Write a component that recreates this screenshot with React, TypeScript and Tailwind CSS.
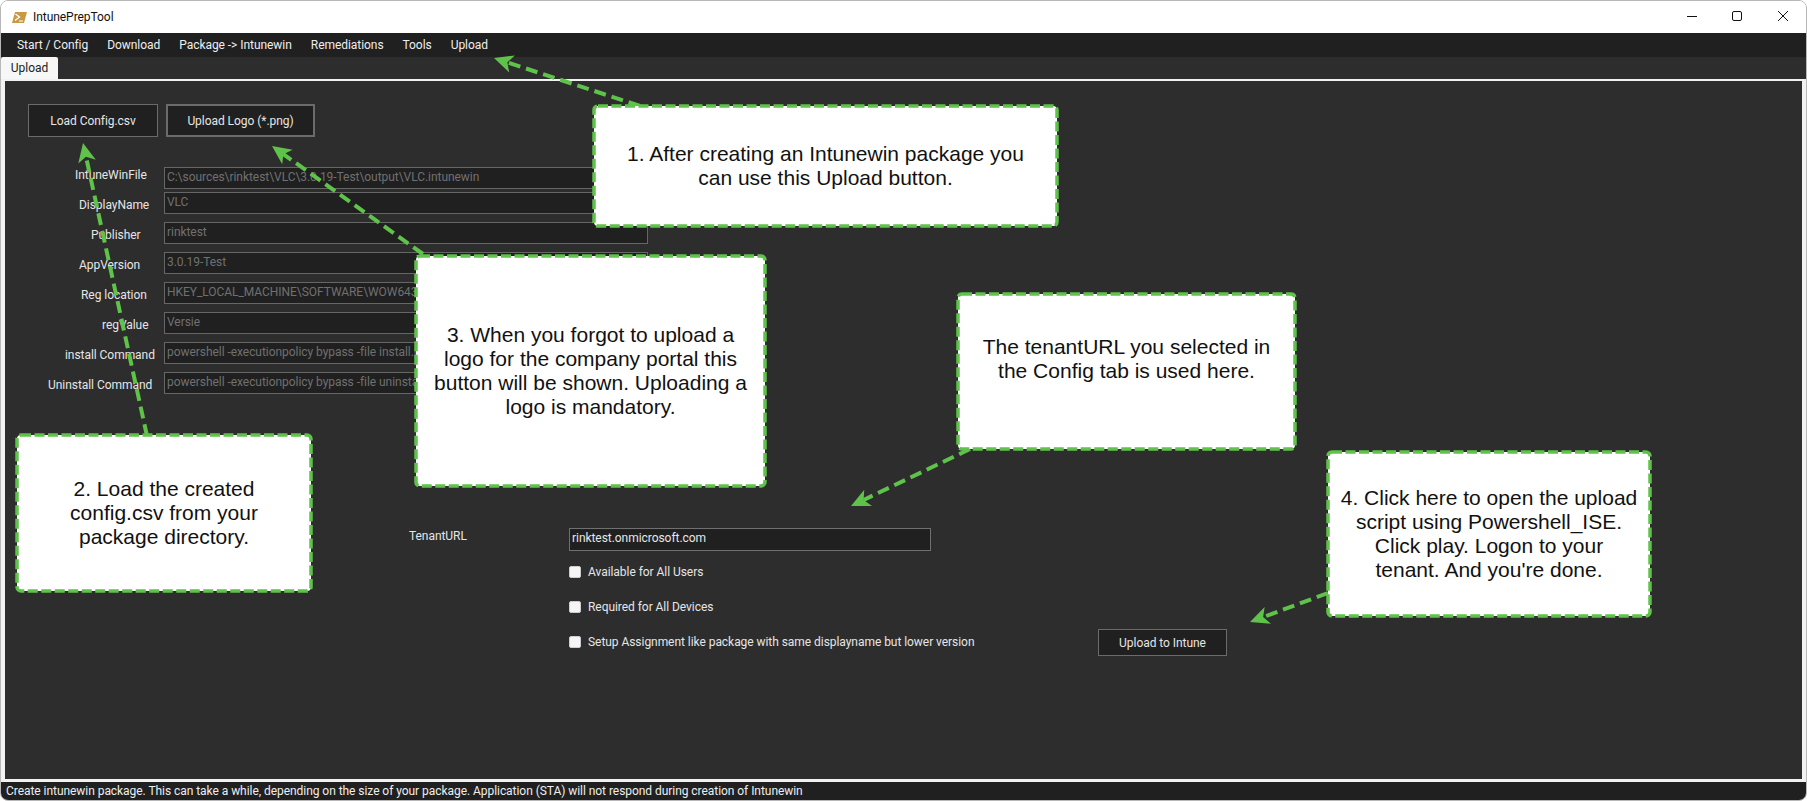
const sans = 'font-["Roboto",sans-serif]';

const menuItems = [
  { label: 'Start / Config', cls: 'ml-[16px]' },
  { label: 'Download', cls: 'ml-[19px]' },
  { label: 'Package -> Intunewin', cls: 'ml-[19px]' },
  { label: 'Remediations', cls: 'ml-[19px]' },
  { label: 'Tools', cls: 'ml-[19px]' },
  { label: 'Upload', cls: 'ml-[19px]' },
];

const fields = [
  { label: 'IntuneWinFile', value: 'C:\\sources\\rinktest\\VLC\\3.0.19-Test\\output\\VLC.intunewin', pad: 'pl-[70px]', gap: '' },
  { label: 'DisplayName', value: 'VLC', pad: 'pl-[74px] pt-[5px]', gap: 'mt-[3px]' },
  { label: 'Publisher', value: 'rinktest', pad: 'pl-[86px] pt-[5px]', gap: 'mt-[8px]' },
  { label: 'AppVersion', value: '3.0.19-Test', pad: 'pl-[74px] pt-[5px]', gap: 'mt-[8px]' },
  { label: 'Reg location', value: 'HKEY_LOCAL_MACHINE\\SOFTWARE\\WOW6432Node\\VideoLAN\\VLC', pad: 'pl-[76px] pt-[5px]', gap: 'mt-[8px]' },
  { label: 'regValue', value: 'Versie', pad: 'pl-[97px] pt-[5px]', gap: 'mt-[8px]' },
  { label: 'install Command', value: 'powershell -executionpolicy bypass -file install.ps1', pad: 'pl-[60px] pt-[5px]', gap: 'mt-[8px]' },
  { label: 'Uninstall Command', value: 'powershell -executionpolicy bypass -file uninstall.ps1', pad: 'pl-[43px] pt-[5px]', gap: 'mt-[8px]' },
];

const checks = [
  { label: 'Available for All Users', gap: 'mt-[14px]' },
  { label: 'Required for All Devices', gap: 'mt-[21px]' },
  { label: 'Setup Assignment like package with same displayname but lower version', gap: 'mt-[21px]' },
];

// annotation arrows, drawn over the form (x1,y1 tail -> x2,y2 tip)
const arrows = [
  [640, 106, 494, 58],
  [147, 436, 83, 143],
  [423, 254, 272, 146],
  [970, 449, 851, 506],
  [1328, 593, 1250, 622],
];

function arrowHead(x1: number, y1: number, x2: number, y2: number) {
  const a = Math.atan2(y2 - y1, x2 - x1);
  const p = (d: number, o: number) =>
    `${x2 - Math.cos(a) * d - Math.sin(a) * o},${y2 - Math.sin(a) * d + Math.cos(a) * o}`;
  return `${x2},${y2} ${p(19, 9)} ${p(14, 0)} ${p(19, -9)}`;
}

function DashedBox({ w, h }: { w: number; h: number }) {
  return (
    <svg className="absolute left-0 top-0" width={w} height={h}>
      <rect x="2" y="2" width={w - 4} height={h - 4} rx="4" fill="white" stroke="#5fc24a" strokeWidth="3.5" strokeDasharray="10 3.5" />
    </svg>
  );
}

function Callout({ cls, w, h, lines, pad = '' }: { cls: string; w: number; h: number; lines: string[]; pad?: string }) {
  return (
    <div className={'absolute ' + cls}>
      <DashedBox w={w} h={h} />
      <div className={'relative flex h-full w-full flex-col items-center justify-center font-["Liberation_Sans",sans-serif] text-[21px] leading-[24px] tracking-normal text-[#111] ' + pad}>
        {lines.map((l) => (
          <div key={l} className="whitespace-nowrap">{l}</div>
        ))}
      </div>
    </div>
  );
}

function PsIcon() {
  return (
    <svg width="15" height="11" viewBox="0 0 15 11" className="ml-[11px] shrink-0">
      <polygon points="3,0 15,0 12,11 0,11" fill="#c99a45" />
      <path d="M3.5 2 L7.5 5 L3 8.5" stroke="white" strokeWidth="1.3" fill="none" />
      <path d="M7 9 H11" stroke="white" strokeWidth="1.2" />
    </svg>
  );
}

function WindowControls() {
  return (
    <div className="-mt-[2px] ml-auto flex items-center">
      <svg width="12" height="12" viewBox="0 0 12 12" className="mr-[33px]"><path d="M1 6.5 H11" stroke="#111" strokeWidth="1" /></svg>
      <svg width="12" height="12" viewBox="0 0 12 12" className="mr-[34px]"><rect x="1.5" y="1.5" width="9" height="9" rx="1.5" fill="none" stroke="#111" strokeWidth="1" /></svg>
      <svg width="12" height="12" viewBox="0 0 12 12" className="mr-[17px]"><path d="M1 1 L11 11 M11 1 L1 11" stroke="#111" strokeWidth="1" /></svg>
    </div>
  );
}

export default function App() {
  return (
    <div className={'relative flex h-[801px] w-[1807px] flex-col overflow-hidden bg-white text-[12px] leading-[16px] tracking-[-0.05px] ' + sans}>
      <div className="flex h-full flex-col overflow-hidden rounded-[8px] border border-[#b8b8b8]">
        {/* title bar */}
        <div className="flex h-[32px] shrink-0 items-center bg-white text-[#111]">
          <PsIcon />
          <span className="ml-[6px]">IntunePrepTool</span>
          <WindowControls />
        </div>

        {/* menu */}
        <div className="flex h-[24px] shrink-0 items-center bg-[#202020] text-[#eee]">
          {menuItems.map((m) => (
            <span key={m.label} className={m.cls}>{m.label}</span>
          ))}
        </div>

        {/* tab row */}
        <div className="flex h-[22px] shrink-0 bg-[#2d2d2d]">
          <div className="flex w-[57px] items-center justify-center rounded-t-[2px] bg-[#f7f7f7] text-[#222]">Upload</div>
        </div>

        {/* tab content */}
        <div className="min-h-0 flex-1 border-[2px] border-x-[4px] border-b-[3px] border-[#f2f2f2] bg-[#2d2d2d] text-[#e6e6e6]">
          <div className="flex pl-[23px] pt-[23px]">
            <button className="h-[33px] w-[130px] border border-[#6b6b6b] bg-[#202020]">Load Config.csv</button>
            <button className="ml-[8px] h-[33px] w-[149px] border-[2px] border-[#6b6b6b] bg-[#202020]">Upload Logo (*.png)</button>
          </div>

          <div className="mt-[30px]">
            {fields.map((f) => (
              <div key={f.label} className={'flex h-[22px] ' + f.gap}>
                <div className={'w-[159px] shrink-0 whitespace-nowrap ' + f.pad}>{f.label}</div>
                <div className="h-[22px] w-[484px] overflow-hidden whitespace-nowrap border border-[#666] bg-[#202020] pl-[2px] leading-[18px] text-[#707070]">
                  {f.value}
                </div>
              </div>
            ))}
          </div>

          <div className="mt-[134px] flex">
            <div className="w-[564px] shrink-0 pl-[404px]">TenantURL</div>
            <div className="h-[23px] w-[362px] border border-[#707070] bg-[#202020] pl-[2px] leading-[19px] text-[#e6e6e6]">
              rinktest.onmicrosoft.com
            </div>
          </div>

          <div className="flex items-start">
            <div className="ml-[564px] w-[529px] shrink-0">
              {checks.map((c) => (
                <div key={c.label} className={'flex h-[14px] items-center ' + c.gap}>
                  <span className="h-[12px] w-[12px] rounded-[2px] border border-[#ccc] bg-[#f5f5f5]" />
                  <span className="ml-[7px] whitespace-nowrap">{c.label}</span>
                </div>
              ))}
            </div>
            <button className="mt-[78px] h-[27px] w-[129px] border border-[#6b6b6b] bg-[#202020]">Upload to Intune</button>
          </div>
        </div>

        {/* status bar */}
        <div className="flex h-[18px] shrink-0 items-center bg-[#202020] pl-[5px] text-[#eee]">
          Create intunewin package. This can take a while, depending on the size of your package. Application (STA) will not respond during creation of Intunewin
        </div>
      </div>

      {/* annotations on top of the form */}
      <svg className="absolute left-0 top-0" width="1807" height="801">
        {arrows.map(([x1, y1, x2, y2], i) => {
          const a = Math.atan2(y2 - y1, x2 - x1);
          return (
            <g key={i}>
              <line x1={x1} y1={y1} x2={x2 - Math.cos(a) * 14} y2={y2 - Math.sin(a) * 14} stroke="#5fc24a" strokeWidth="4" strokeDasharray="12 6" />
              <polygon points={arrowHead(x1, y1, x2, y2)} fill="#5fc24a" />
            </g>
          );
        })}
      </svg>

      <Callout cls="left-[592px] top-[104px] h-[124px] w-[467px]" w={467} h={124} lines={['1. After creating an Intunewin package you', 'can use this Upload button.']} />
      <Callout cls="left-[15px] top-[433px] h-[160px] w-[298px]" w={298} h={160} lines={['2. Load the created', 'config.csv from your', 'package directory.']} />
      <Callout cls="left-[414px] top-[254px] h-[234px] w-[353px]" w={353} h={234} lines={['3. When you forgot to upload a', 'logo for the company portal this', 'button will be shown. Uploading a', 'logo is mandatory.']} />
      <Callout cls="left-[956px] top-[292px] h-[159px] w-[341px]" w={341} h={159} pad="pb-[26px]" lines={['The tenantURL you selected in', 'the Config tab is used here.']} />
      <Callout cls="left-[1326px] top-[450px] h-[168px] w-[326px]" w={326} h={168} lines={['4. Click here to open the upload', 'script using Powershell_ISE.', 'Click play. Logon to your', "tenant. And you're done."]} />
    </div>
  );
}
